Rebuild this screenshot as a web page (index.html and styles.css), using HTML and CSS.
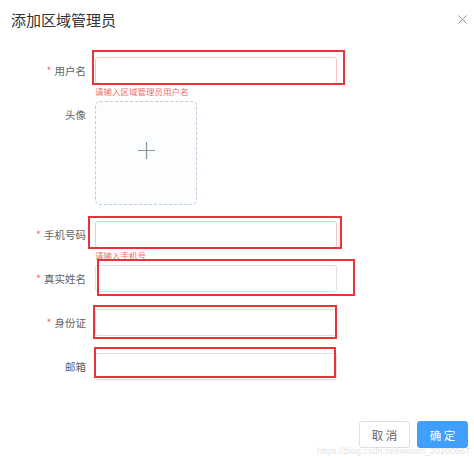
FILE: index.html
```html
<!DOCTYPE html>
<html lang="zh">
<head>
<meta charset="utf-8">
<link rel="stylesheet" href="styles.css">
</head>
<body>
<div class="dialog">
  <div class="header">
    <span class="title">添加区域管理员</span>
    <span class="close">
      <svg width="9" height="9" viewBox="0 0 9 9"><path d="M0.5 0.5L8.5 8.5M8.5 0.5L0.5 8.5" stroke="#909399" stroke-width="1"/></svg>
    </span>
  </div>
  <form class="form">
    <div class="row">
      <label class="label"><span class="req">*</span>用户名</label>
      <div class="field">
        <div class="input error"></div>
        <div class="msg">请输入区域管理员用户名</div>
      </div>
    </div>
    <div class="row">
      <label class="label">头像</label>
      <div class="field">
        <div class="upload">
          <svg class="plus" width="17" height="17" viewBox="0 0 17 17"><path d="M8.5 0V17M0 8.5H17" stroke="#8c939d" stroke-width="1.2"/></svg>
        </div>
      </div>
    </div>
    <div class="row">
      <label class="label"><span class="req">*</span>手机号码</label>
      <div class="field">
        <div class="input error"></div>
        <div class="msg">请输入手机号</div>
      </div>
    </div>
    <div class="row">
      <label class="label"><span class="req">*</span>真实姓名</label>
      <div class="field"><div class="input"></div></div>
    </div>
    <div class="row">
      <label class="label"><span class="req">*</span>身份证</label>
      <div class="field"><div class="input"></div></div>
    </div>
    <div class="row">
      <label class="label">邮箱</label>
      <div class="field"><div class="input"></div></div>
    </div>
  </form>
  <div class="footer">
    <button class="btn" type="button">取 消</button>
    <button class="btn primary" type="button">确 定</button>
  </div>
  <div class="watermark">https://blog.csdn.net/weixin_20200867</div>
  <div class="mark m1"></div>
  <div class="mark m2"></div>
  <div class="mark m3"></div>
  <div class="mark m4"></div>
  <div class="mark m5"></div>
</div>
</body>
</html>
```

FILE: styles.css
```css
* { box-sizing: border-box; }
html, body { margin: 0; padding: 0; background: #fff; }
body {
  font-family: "Noto Sans CJK SC", "Noto Sans", sans-serif;
  color: #606266;
}
.dialog {
  position: relative;
  width: 474px;
  height: 459px;
}
.header {
  display: flex;
  justify-content: space-between;
  align-items: center;
  height: 40px;
  padding: 0 7px 0 11px;
}
.title {
  font-size: 15px;
  color: #303133;
  line-height: 20px;
}
.close { display: flex; margin-top: -2px; }
.form {
  padding-top: 17px;
}
.row {
  display: flex;
  margin-bottom: 16px;
}
.label {
  width: 95px;
  padding-right: 9px;
  text-align: right;
  font-size: 10.5px;
  line-height: 28px;
  color: #606266;
}
.req { color: #f56c6c; margin-right: 3px; }
.field { position: relative; }
.input {
  width: 242px;
  height: 27px;
  border: 1px solid #dcdfe6;
  border-radius: 3px;
  background: #fff;
}
.input.error { border-color: #fbc4c4; }
.msg {
  position: absolute;
  left: 0;
  top: 28px;
  font-size: 8.5px;
  line-height: 12px;
  color: #f56c6c;
  white-space: nowrap;
}
.upload {
  width: 102px;
  height: 104px;
  border: 1px dashed #c0ccda;
  border-radius: 5px;
  background: #fbfdff;
  display: flex;
  align-items: center;
  justify-content: center;
}
.plus { margin-top: -6px; }
.footer {
  position: absolute;
  right: 6px;
  top: 421px;
  display: flex;
  gap: 7px;
}
.btn {
  width: 51px;
  height: 27px;
  border: 1px solid #dcdfe6;
  border-radius: 3px;
  background: #fff;
  color: #606266;
  font-family: inherit;
  font-size: 11.5px;
  padding: 0;
}
.btn.primary {
  background: #409eff;
  border-color: #409eff;
  color: #fff;
}
.watermark {
  position: absolute;
  right: 4px;
  top: 446px;
  font-family: "Liberation Sans", sans-serif;
  font-size: 9px;
  color: rgba(160, 160, 160, 0.35);
  white-space: nowrap;
}
.mark {
  position: absolute;
  border: 2px solid #e8333b;
  pointer-events: none;
}
.m1 { left: 92px; top: 50px; width: 253px; height: 35px; }
.m2 { left: 88px; top: 216px; width: 254px; height: 33px; }
.m3 { left: 97px; top: 259px; width: 258px; height: 37px; }
.m4 { left: 93px; top: 305px; width: 244px; height: 34px; }
.m5 { left: 94px; top: 347px; width: 242px; height: 31px; }
```
